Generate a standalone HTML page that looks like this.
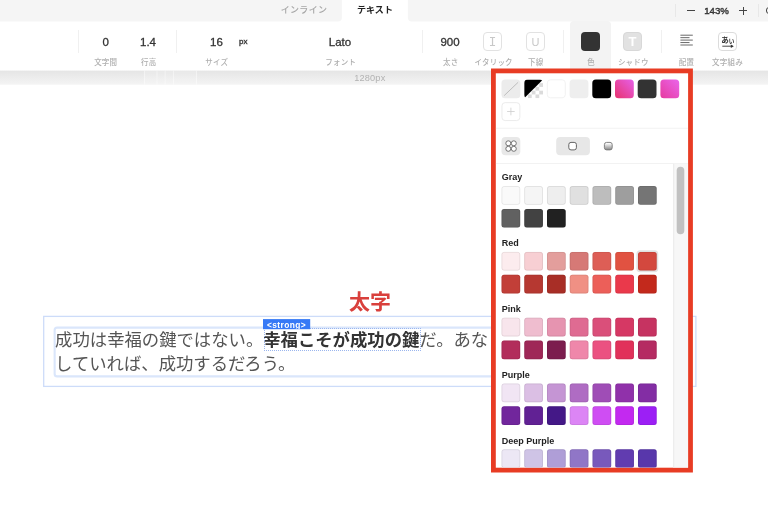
<!DOCTYPE html>
<html lang="ja">
<head>
<meta charset="utf-8">
<title>テキスト</title>
<style>
*{box-sizing:border-box;margin:0;padding:0}
html,body{width:768px;height:509px;overflow:hidden;background:#fff}
body{position:relative;will-change:transform;font-family:"Liberation Sans","Noto Sans CJK JP",sans-serif;color:#333}
.abs{position:absolute}
#topbar{position:absolute;left:0;top:0;width:768px;height:21px;background:#f5f5f5}
#tab-inline{position:absolute;left:270px;top:0;width:68px;height:21px;line-height:20px;text-align:center;font-size:9px;font-weight:500;color:#a6a6a6;letter-spacing:.3px}
#tab-text{position:absolute;left:342px;top:.4px;width:66px;height:21px;line-height:20px;text-align:center;font-size:9px;font-weight:700;color:#222;letter-spacing:.1px}
#toolbar{position:absolute;left:0;top:21px;width:768px;height:50px;background:#fff}
#ruler{position:absolute;left:0;top:71px;width:768px;height:13px;background:linear-gradient(#e6e6e6,#f4f4f4)}
.vdiv{position:absolute;top:30px;width:1px;height:23px;background:#f0f0f0}
.val{position:absolute;top:34px;height:16px;line-height:16px;font-size:11.5px;color:#333;-webkit-text-stroke:.3px #333;text-align:center;transform:translateX(-50%);white-space:nowrap}
.lab{position:absolute;top:56.8px;margin-left:.7px;font-weight:500;height:12px;line-height:12px;font-size:7.5px;color:#b0b0b0;text-align:center;transform:translateX(-50%);white-space:nowrap;letter-spacing:.2px}
.ibox{position:absolute;top:32px;width:19px;height:19px;border:1px solid #e2e2e2;border-radius:4px;background:#fff;color:#c8c8c8;font-size:10px;line-height:17px;text-align:center}
#colorbtn{position:absolute;left:570px;top:21px;width:41px;height:50px;background:#f3f3f3;border-radius:4px 4px 0 0}
#colorsq{position:absolute;left:581px;top:32px;width:19px;height:19px;border-radius:4px;background:#333}
#shadowsq{position:absolute;left:623px;top:32px;width:19px;height:19px;border-radius:4px;background:#e2e2e2;border:1px solid #d8d8d8;color:#fff;font-weight:700;font-size:13px;line-height:17px;text-align:center}
/* canvas */
#frame-outer{position:absolute;left:43px;top:315.8px;width:653.4px;height:71.2px;border:1.2px solid #cddcf8}
#frame-inner{position:absolute;left:53px;top:326px;width:637px;height:52px;border:2.6px solid #dbe6fb;border-radius:3px}
#para{position:absolute;left:55.1px;top:327.65px;width:700px;font-family:"Liberation Sans","Noto Sans CJK JP",sans-serif;font-size:17.35px;line-height:24px;color:#555;white-space:nowrap}
#para b{font-weight:700;color:#333}
#selbox{position:absolute;left:264px;top:328px;width:157px;height:22.6px;border:1px dotted #9bb6ee}
#tag{position:absolute;left:263px;top:319px;width:47.2px;height:10.4px;color:#fff;font-size:8.4px;font-weight:700;line-height:10.2px;padding-top:.8px;text-align:center;letter-spacing:.42px;overflow:hidden}
#futoji{position:absolute;left:348.6px;top:288.3px;width:43px;height:28px;line-height:28px;font-size:21px;font-weight:700;color:#d9403c;text-align:center;white-space:nowrap}
/* panel */
#panel{position:absolute;left:491px;top:68.5px;width:202px;height:404px;border:4.8px solid #e83c24;background:#fff;overflow:hidden}
.sw{position:absolute;width:19px;height:19px;border-radius:3px}
.sw.lt{box-shadow:inset 0 0 0 1px rgba(0,0,0,.08)}
.gl{font-family:"Liberation Sans",sans-serif;font-size:9px;font-weight:700;fill:#222}
.hline{position:absolute;left:496px;width:192px;height:1px;background:#efefef}
#strack{position:absolute;left:673.5px;top:164px;width:14.7px;height:304px;background:#f7f7f7;border-left:1px solid #e6e6e6}
#sthumb{position:absolute;left:676.7px;top:167px;width:7.6px;height:67px;border-radius:4px;background:#c1c1c1}
</style>
</head>
<body>
<svg class="abs" style="left:0;top:0" width="768" height="100" viewBox="0 0 768 100">
<defs><linearGradient id="rg" x1="0" y1="0" x2="0" y2="1"><stop offset="0" stop-color="#e5e5e5"/><stop offset="1" stop-color="#f4f4f4"/></linearGradient></defs>
<path d="M0 0H341.9V17.5a4 4 0 0 1 -4 4H0Z" fill="#f5f5f5"/>
<path d="M407.9 0H768V21.5H411.9a4 4 0 0 1 -4 -4Z" fill="#f5f5f5"/>
<rect x="0" y="70.6" width="768" height="14.1" fill="url(#rg)"/>
<g fill="#fff" fill-opacity=".55"><rect x="144" y="70.6" width=".8" height="14.1"/><rect x="156.6" y="70.6" width=".8" height="14.1"/><rect x="164.7" y="70.6" width=".8" height="14.1"/><rect x="173.2" y="70.6" width=".8" height="14.1"/><rect x="196.2" y="70.6" width=".8" height="14.1"/></g>
<rect x="144" y="70.6" width="53" height="14.1" fill="#fff" fill-opacity=".12"/>
</svg>
<div id="tab-inline">インライン</div>
<div id="tab-text">テキスト</div>
<div class="abs" style="left:349.8px;top:71.8px;width:40px;height:12px;line-height:12px;font-size:9.2px;color:#b2b2b2;text-align:center;letter-spacing:.2px">1280px</div>

<!-- zoom controls -->
<div class="abs" style="left:675px;top:4px;width:1px;height:13px;background:#e8e8e8"></div>
<div class="abs" style="left:758px;top:4px;width:1px;height:13px;background:#e8e8e8"></div>
<div class="abs" style="left:687px;top:10px;width:8px;height:1px;background:#444"></div>
<div class="abs" style="left:700.6px;top:3.3px;width:32px;height:15px;line-height:15px;font-size:9.7px;color:#333;-webkit-text-stroke:.4px #333;text-align:center">143%</div>
<div class="abs" style="left:739px;top:10px;width:8px;height:1px;background:#444"></div>
<div class="abs" style="left:742.5px;top:6.5px;width:1px;height:8px;background:#444"></div>
<div class="abs" style="left:766px;top:7px;width:6px;height:7px;border:1px solid #444;border-radius:3px"></div>

<!-- toolbar items -->
<div class="vdiv" style="left:78px"></div>
<div class="vdiv" style="left:176px"></div>
<div class="vdiv" style="left:422px"></div>
<div class="vdiv" style="left:563px"></div>
<div class="vdiv" style="left:661px"></div>

<div class="val" style="left:105.8px">0</div>
<div class="lab" style="left:105px">文字間</div>
<div class="val" style="left:148px">1.4</div>
<div class="lab" style="left:148px">行高</div>
<div class="val" style="left:216.4px">16</div>
<div class="abs" style="left:239px;top:37.3px;font-size:8px;line-height:10px;color:#333;-webkit-text-stroke:.35px #333">px</div>
<div class="lab" style="left:216px">サイズ</div>
<div class="val" style="left:340px">Lato</div>
<div class="lab" style="left:340px">フォント</div>
<div class="val" style="left:450px">900</div>
<div class="lab" style="left:450px">太さ</div>
<div class="ibox" style="left:483px;font-family:'Liberation Mono',monospace;font-size:12.6px;line-height:20.4px;overflow:hidden">I</div>
<div class="lab" style="left:493px">イタリック</div>
<div class="ibox" style="left:526px;font-size:11px;line-height:18.6px;overflow:hidden">U</div>
<div class="lab" style="left:535px">下線</div>
<div id="colorbtn"></div>
<div id="colorsq"></div>
<div class="lab" style="left:590.5px">色</div>
<div id="shadowsq">T</div>
<div class="lab" style="left:632.6px">シャドウ</div>
<!-- align icon -->
<svg class="abs" style="left:680px;top:33px" width="14" height="14" viewBox="0 0 14 14"><g stroke="#444" stroke-width=".8"><line x1="0.4" y1="2.2" x2="12.8" y2="2.2"/><line x1="0.4" y1="4.65" x2="9.5" y2="4.65"/><line x1="0.4" y1="7.1" x2="12.8" y2="7.1"/><line x1="0.4" y1="9.55" x2="9.5" y2="9.55"/><line x1="0.4" y1="12" x2="12.8" y2="12"/></g></svg>
<div class="lab" style="left:685.8px">配置</div>
<div class="ibox" style="left:718px;border-color:#dcdcdc"></div><div class="abs" style="left:721.2px;top:35.5px;width:14px;height:10px;line-height:10px;font-size:7.6px;color:#333;font-weight:700;white-space:nowrap"><span>あ</span><span style="font-size:5.6px">い</span></div>
<svg class="abs" style="left:718px;top:32px" width="19" height="19" viewBox="0 0 19 19"><path d="M4.3 14.2h10.2" stroke="#333" stroke-width=".9" fill="none"/><path d="M12.8 12.5l3 1.7l-3 1.7z" fill="#333"/></svg>

<div class="lab" style="left:726.8px">文字組み</div>

<!-- canvas -->
<div id="futoji">太字</div>
<svg class="abs" style="left:0;top:300px" width="768" height="100" viewBox="0 300 768 100"><rect x="43.7" y="316.4" width="652.2" height="70" fill="none" stroke="#cddcf9" stroke-width="1.3"/><rect x="54.65" y="327.6" width="636" height="48.8" rx="2.5" fill="none" stroke="#dae6fb" stroke-width="2.1"/></svg>
<div id="para">成功は幸福の鍵ではない。<b>幸福こそが成功の鍵</b>だ。あな<br>していれば、成功するだろう。</div>
<div id="selbox"></div>
<svg class="abs" style="left:260px;top:316px" width="56" height="16" viewBox="260 316 56 16"><rect x="263" y="319.1" width="47.2" height="10.1" fill="#3679f6"/></svg>
<div id="tag">&lt;strong&gt;</div>

<!-- panel -->
<svg class="abs" style="left:0;top:0" width="768" height="509" viewBox="0 0 768 509">
<defs>
<clipPath id="pc"><rect x="495.8" y="73.4" width="192.3" height="394.2"/></clipPath>
<clipPath id="rc"><rect x="524.2" y="79.4" width="18.8" height="18.8" rx="3.5"/></clipPath>
<linearGradient id="g1" x1="0" y1="1" x2="1" y2="0"><stop offset="0" stop-color="#e8336e"/><stop offset="1" stop-color="#e660ea"/></linearGradient>
<linearGradient id="g2" x1="1" y1="0" x2="0" y2="1"><stop offset="0" stop-color="#ea66ec"/><stop offset="1" stop-color="#e63a9e"/></linearGradient>
<linearGradient id="g3" x1="0" y1="0" x2="0" y2="1"><stop offset="0.1" stop-color="#fff"/><stop offset="1" stop-color="#858585"/></linearGradient>
</defs>
<rect x="493.4" y="70.9" width="197.1" height="399.2" fill="#fff" stroke="#e83c24" stroke-width="4.8"/>
<g clip-path="url(#pc)">
<!-- top swatches -->
<rect x="501.5" y="79.4" width="18.8" height="18.8" rx="3.5" fill="#ececec"/>
<line x1="504.2" y1="95.6" x2="518.1" y2="82.3" stroke="#b8b8b8" stroke-width=".9"/>
<g clip-path="url(#rc)"><rect x="524.2" y="79.4" width="19" height="19" fill="#fff"/>
<g fill="#dbdbdb" transform="translate(524.2 79.4)"><rect x="15.04" y="3.76" width="3.76" height="3.76"/><rect x="11.28" y="7.52" width="3.76" height="3.76"/><rect x="15.04" y="11.28" width="3.76" height="3.76"/><rect x="7.52" y="11.28" width="3.76" height="3.76"/><rect x="3.76" y="15.04" width="3.76" height="3.76"/><rect x="11.28" y="15.04" width="3.76" height="3.76"/></g>
<polygon points="524.2,79.4 543,79.4 524.2,98.2" fill="#000"/></g>
<rect x="547.3" y="79.8" width="18" height="18" rx="3.2" fill="#fff" stroke="#f0f0f0" stroke-width=".9"/>
<rect x="569.6" y="79.4" width="18.8" height="18.8" rx="3.5" fill="#eeeeee"/>
<rect x="592.3" y="79.4" width="18.8" height="18.8" rx="3.5" fill="#000"/>
<rect x="615" y="79.4" width="18.8" height="18.8" rx="3.5" fill="url(#g1)"/>
<rect x="637.7" y="79.4" width="18.8" height="18.8" rx="3.5" fill="#333"/>
<rect x="660.4" y="79.4" width="18.8" height="18.8" rx="3.5" fill="url(#g2)"/>
<rect x="501.95" y="102.65" width="17.9" height="17.9" rx="3.2" fill="#fff" stroke="#e9e9e9" stroke-width=".9"/>
<path d="M507.1 111.5h7.6M510.9 107.7v7.6" stroke="#d0d0d0" stroke-width=".85" fill="none"/>
<rect x="495.8" y="127.8" width="192.3" height=".9" fill="#f1f1f1"/>
<!-- mode row -->
<rect x="501.5" y="136.9" width="18.8" height="18.4" rx="4" fill="#e8e8e8"/>
<g fill="#fff" stroke="#555" stroke-width=".8"><circle cx="508.3" cy="143.3" r="2.5"/><circle cx="513.8" cy="143.3" r="2.5"/><circle cx="508.3" cy="148.8" r="2.5"/><circle cx="513.8" cy="148.8" r="2.5"/></g>
<rect x="556.2" y="136.9" width="33.7" height="18.4" rx="4" fill="#e7e7e7"/>
<rect x="568.8" y="142.4" width="7.6" height="7.5" rx="2.2" fill="#fff" stroke="#555" stroke-width=".9"/>
<rect x="604.4" y="142.4" width="7.8" height="7.5" rx="2.2" fill="url(#g3)" stroke="#777" stroke-width=".9"/>
<rect x="495.8" y="163" width="192.3" height=".9" fill="#f1f1f1"/>
<!-- scrollbar -->
<rect x="673.3" y="163.9" width="15" height="304" fill="#f7f7f7"/>
<rect x="673.3" y="163.9" width=".9" height="304" fill="#e8e8e8"/>
<rect x="676.7" y="166.8" width="7.6" height="67.4" rx="3.8" fill="#c1c1c1"/>
<g>
<text x="501.8" y="180.4" class="gl">Gray</text>
<rect x="501.50" y="186.10" width="18.7" height="18.7" rx="2.5" fill="#fafafa"/>
<rect x="501.90" y="186.50" width="17.9" height="17.9" rx="2.2" fill="none" stroke="#000" stroke-opacity=".09" stroke-width=".8"/>
<rect x="524.25" y="186.10" width="18.7" height="18.7" rx="2.5" fill="#f5f5f5"/>
<rect x="524.65" y="186.50" width="17.9" height="17.9" rx="2.2" fill="none" stroke="#000" stroke-opacity=".09" stroke-width=".8"/>
<rect x="547.00" y="186.10" width="18.7" height="18.7" rx="2.5" fill="#eeeeee"/>
<rect x="547.40" y="186.50" width="17.9" height="17.9" rx="2.2" fill="none" stroke="#000" stroke-opacity=".09" stroke-width=".8"/>
<rect x="569.75" y="186.10" width="18.7" height="18.7" rx="2.5" fill="#e0e0e0"/>
<rect x="570.15" y="186.50" width="17.9" height="17.9" rx="2.2" fill="none" stroke="#000" stroke-opacity=".09" stroke-width=".8"/>
<rect x="592.50" y="186.10" width="18.7" height="18.7" rx="2.5" fill="#bdbdbd"/>
<rect x="592.90" y="186.50" width="17.9" height="17.9" rx="2.2" fill="none" stroke="#000" stroke-opacity=".09" stroke-width=".8"/>
<rect x="615.25" y="186.10" width="18.7" height="18.7" rx="2.5" fill="#9e9e9e"/>
<rect x="615.65" y="186.50" width="17.9" height="17.9" rx="2.2" fill="none" stroke="#000" stroke-opacity=".09" stroke-width=".8"/>
<rect x="638.00" y="186.10" width="18.7" height="18.7" rx="2.5" fill="#757575"/>
<rect x="638.40" y="186.50" width="17.9" height="17.9" rx="2.2" fill="none" stroke="#000" stroke-opacity=".09" stroke-width=".8"/>
<rect x="501.50" y="208.90" width="18.7" height="18.7" rx="2.5" fill="#616161"/>
<rect x="501.90" y="209.30" width="17.9" height="17.9" rx="2.2" fill="none" stroke="#000" stroke-opacity=".09" stroke-width=".8"/>
<rect x="524.25" y="208.90" width="18.7" height="18.7" rx="2.5" fill="#424242"/>
<rect x="524.65" y="209.30" width="17.9" height="17.9" rx="2.2" fill="none" stroke="#000" stroke-opacity=".09" stroke-width=".8"/>
<rect x="547.00" y="208.90" width="18.7" height="18.7" rx="2.5" fill="#212121"/>
<rect x="547.40" y="209.30" width="17.9" height="17.9" rx="2.2" fill="none" stroke="#000" stroke-opacity=".09" stroke-width=".8"/>
<text x="501.8" y="246.2" class="gl">Red</text>
<rect x="501.50" y="251.90" width="18.7" height="18.7" rx="2.5" fill="#fcecee"/>
<rect x="501.90" y="252.30" width="17.9" height="17.9" rx="2.2" fill="none" stroke="#000" stroke-opacity=".09" stroke-width=".8"/>
<rect x="524.25" y="251.90" width="18.7" height="18.7" rx="2.5" fill="#f7cfd3"/>
<rect x="524.65" y="252.30" width="17.9" height="17.9" rx="2.2" fill="none" stroke="#000" stroke-opacity=".09" stroke-width=".8"/>
<rect x="547.00" y="251.90" width="18.7" height="18.7" rx="2.5" fill="#e39e9c"/>
<rect x="547.40" y="252.30" width="17.9" height="17.9" rx="2.2" fill="none" stroke="#000" stroke-opacity=".09" stroke-width=".8"/>
<rect x="569.75" y="251.90" width="18.7" height="18.7" rx="2.5" fill="#d67976"/>
<rect x="570.15" y="252.30" width="17.9" height="17.9" rx="2.2" fill="none" stroke="#000" stroke-opacity=".09" stroke-width=".8"/>
<rect x="592.50" y="251.90" width="18.7" height="18.7" rx="2.5" fill="#dd5e56"/>
<rect x="592.90" y="252.30" width="17.9" height="17.9" rx="2.2" fill="none" stroke="#000" stroke-opacity=".09" stroke-width=".8"/>
<rect x="615.25" y="251.90" width="18.7" height="18.7" rx="2.5" fill="#e15241"/>
<rect x="615.65" y="252.30" width="17.9" height="17.9" rx="2.2" fill="none" stroke="#000" stroke-opacity=".09" stroke-width=".8"/>
<rect x="636.40" y="250.30" width="21.9" height="21.9" rx="3.8" fill="#e3e3e3"/>
<rect x="638.00" y="251.90" width="18.7" height="18.7" rx="2.5" fill="#d3483e"/>
<rect x="638.40" y="252.30" width="17.9" height="17.9" rx="2.2" fill="none" stroke="#000" stroke-opacity=".09" stroke-width=".8"/>
<rect x="501.50" y="274.70" width="18.7" height="18.7" rx="2.5" fill="#c23f38"/>
<rect x="501.90" y="275.10" width="17.9" height="17.9" rx="2.2" fill="none" stroke="#000" stroke-opacity=".09" stroke-width=".8"/>
<rect x="524.25" y="274.70" width="18.7" height="18.7" rx="2.5" fill="#b63831"/>
<rect x="524.65" y="275.10" width="17.9" height="17.9" rx="2.2" fill="none" stroke="#000" stroke-opacity=".09" stroke-width=".8"/>
<rect x="547.00" y="274.70" width="18.7" height="18.7" rx="2.5" fill="#a82e26"/>
<rect x="547.40" y="275.10" width="17.9" height="17.9" rx="2.2" fill="none" stroke="#000" stroke-opacity=".09" stroke-width=".8"/>
<rect x="569.75" y="274.70" width="18.7" height="18.7" rx="2.5" fill="#f09084"/>
<rect x="570.15" y="275.10" width="17.9" height="17.9" rx="2.2" fill="none" stroke="#000" stroke-opacity=".09" stroke-width=".8"/>
<rect x="592.50" y="274.70" width="18.7" height="18.7" rx="2.5" fill="#ec5f59"/>
<rect x="592.90" y="275.10" width="17.9" height="17.9" rx="2.2" fill="none" stroke="#000" stroke-opacity=".09" stroke-width=".8"/>
<rect x="615.25" y="274.70" width="18.7" height="18.7" rx="2.5" fill="#ea394b"/>
<rect x="615.65" y="275.10" width="17.9" height="17.9" rx="2.2" fill="none" stroke="#000" stroke-opacity=".09" stroke-width=".8"/>
<rect x="638.00" y="274.70" width="18.7" height="18.7" rx="2.5" fill="#c3291c"/>
<rect x="638.40" y="275.10" width="17.9" height="17.9" rx="2.2" fill="none" stroke="#000" stroke-opacity=".09" stroke-width=".8"/>
<text x="501.8" y="312.0" class="gl">Pink</text>
<rect x="501.50" y="317.70" width="18.7" height="18.7" rx="2.5" fill="#f8e5ec"/>
<rect x="501.90" y="318.10" width="17.9" height="17.9" rx="2.2" fill="none" stroke="#000" stroke-opacity=".09" stroke-width=".8"/>
<rect x="524.25" y="317.70" width="18.7" height="18.7" rx="2.5" fill="#efbdcf"/>
<rect x="524.65" y="318.10" width="17.9" height="17.9" rx="2.2" fill="none" stroke="#000" stroke-opacity=".09" stroke-width=".8"/>
<rect x="547.00" y="317.70" width="18.7" height="18.7" rx="2.5" fill="#e694b0"/>
<rect x="547.40" y="318.10" width="17.9" height="17.9" rx="2.2" fill="none" stroke="#000" stroke-opacity=".09" stroke-width=".8"/>
<rect x="569.75" y="317.70" width="18.7" height="18.7" rx="2.5" fill="#df6b92"/>
<rect x="570.15" y="318.10" width="17.9" height="17.9" rx="2.2" fill="none" stroke="#000" stroke-opacity=".09" stroke-width=".8"/>
<rect x="592.50" y="317.70" width="18.7" height="18.7" rx="2.5" fill="#da4f7a"/>
<rect x="592.90" y="318.10" width="17.9" height="17.9" rx="2.2" fill="none" stroke="#000" stroke-opacity=".09" stroke-width=".8"/>
<rect x="615.25" y="317.70" width="18.7" height="18.7" rx="2.5" fill="#d63864"/>
<rect x="615.65" y="318.10" width="17.9" height="17.9" rx="2.2" fill="none" stroke="#000" stroke-opacity=".09" stroke-width=".8"/>
<rect x="638.00" y="317.70" width="18.7" height="18.7" rx="2.5" fill="#c63361"/>
<rect x="638.40" y="318.10" width="17.9" height="17.9" rx="2.2" fill="none" stroke="#000" stroke-opacity=".09" stroke-width=".8"/>
<rect x="501.50" y="340.50" width="18.7" height="18.7" rx="2.5" fill="#b22d5b"/>
<rect x="501.90" y="340.90" width="17.9" height="17.9" rx="2.2" fill="none" stroke="#000" stroke-opacity=".09" stroke-width=".8"/>
<rect x="524.25" y="340.50" width="18.7" height="18.7" rx="2.5" fill="#9f2757"/>
<rect x="524.65" y="340.90" width="17.9" height="17.9" rx="2.2" fill="none" stroke="#000" stroke-opacity=".09" stroke-width=".8"/>
<rect x="547.00" y="340.50" width="18.7" height="18.7" rx="2.5" fill="#7c1d4e"/>
<rect x="547.40" y="340.90" width="17.9" height="17.9" rx="2.2" fill="none" stroke="#000" stroke-opacity=".09" stroke-width=".8"/>
<rect x="569.75" y="340.50" width="18.7" height="18.7" rx="2.5" fill="#ef87aa"/>
<rect x="570.15" y="340.90" width="17.9" height="17.9" rx="2.2" fill="none" stroke="#000" stroke-opacity=".09" stroke-width=".8"/>
<rect x="592.50" y="340.50" width="18.7" height="18.7" rx="2.5" fill="#eb5181"/>
<rect x="592.90" y="340.90" width="17.9" height="17.9" rx="2.2" fill="none" stroke="#000" stroke-opacity=".09" stroke-width=".8"/>
<rect x="615.25" y="340.50" width="18.7" height="18.7" rx="2.5" fill="#e1315a"/>
<rect x="615.65" y="340.90" width="17.9" height="17.9" rx="2.2" fill="none" stroke="#000" stroke-opacity=".09" stroke-width=".8"/>
<rect x="638.00" y="340.50" width="18.7" height="18.7" rx="2.5" fill="#b52b62"/>
<rect x="638.40" y="340.90" width="17.9" height="17.9" rx="2.2" fill="none" stroke="#000" stroke-opacity=".09" stroke-width=".8"/>
<text x="501.8" y="377.8" class="gl">Purple</text>
<rect x="501.50" y="383.50" width="18.7" height="18.7" rx="2.5" fill="#f1e5f4"/>
<rect x="501.90" y="383.90" width="17.9" height="17.9" rx="2.2" fill="none" stroke="#000" stroke-opacity=".09" stroke-width=".8"/>
<rect x="524.25" y="383.50" width="18.7" height="18.7" rx="2.5" fill="#dbbfe4"/>
<rect x="524.65" y="383.90" width="17.9" height="17.9" rx="2.2" fill="none" stroke="#000" stroke-opacity=".09" stroke-width=".8"/>
<rect x="547.00" y="383.50" width="18.7" height="18.7" rx="2.5" fill="#c595d4"/>
<rect x="547.40" y="383.90" width="17.9" height="17.9" rx="2.2" fill="none" stroke="#000" stroke-opacity=".09" stroke-width=".8"/>
<rect x="569.75" y="383.50" width="18.7" height="18.7" rx="2.5" fill="#af6cc3"/>
<rect x="570.15" y="383.90" width="17.9" height="17.9" rx="2.2" fill="none" stroke="#000" stroke-opacity=".09" stroke-width=".8"/>
<rect x="592.50" y="383.50" width="18.7" height="18.7" rx="2.5" fill="#9f4db6"/>
<rect x="592.90" y="383.90" width="17.9" height="17.9" rx="2.2" fill="none" stroke="#000" stroke-opacity=".09" stroke-width=".8"/>
<rect x="615.25" y="383.50" width="18.7" height="18.7" rx="2.5" fill="#9031aa"/>
<rect x="615.65" y="383.90" width="17.9" height="17.9" rx="2.2" fill="none" stroke="#000" stroke-opacity=".09" stroke-width=".8"/>
<rect x="638.00" y="383.50" width="18.7" height="18.7" rx="2.5" fill="#832da4"/>
<rect x="638.40" y="383.90" width="17.9" height="17.9" rx="2.2" fill="none" stroke="#000" stroke-opacity=".09" stroke-width=".8"/>
<rect x="501.50" y="406.30" width="18.7" height="18.7" rx="2.5" fill="#71269c"/>
<rect x="501.90" y="406.70" width="17.9" height="17.9" rx="2.2" fill="none" stroke="#000" stroke-opacity=".09" stroke-width=".8"/>
<rect x="524.25" y="406.30" width="18.7" height="18.7" rx="2.5" fill="#612194"/>
<rect x="524.65" y="406.70" width="17.9" height="17.9" rx="2.2" fill="none" stroke="#000" stroke-opacity=".09" stroke-width=".8"/>
<rect x="547.00" y="406.30" width="18.7" height="18.7" rx="2.5" fill="#441887"/>
<rect x="547.40" y="406.70" width="17.9" height="17.9" rx="2.2" fill="none" stroke="#000" stroke-opacity=".09" stroke-width=".8"/>
<rect x="569.75" y="406.30" width="18.7" height="18.7" rx="2.5" fill="#dc85f5"/>
<rect x="570.15" y="406.70" width="17.9" height="17.9" rx="2.2" fill="none" stroke="#000" stroke-opacity=".09" stroke-width=".8"/>
<rect x="592.50" y="406.30" width="18.7" height="18.7" rx="2.5" fill="#cf4df3"/>
<rect x="592.90" y="406.70" width="17.9" height="17.9" rx="2.2" fill="none" stroke="#000" stroke-opacity=".09" stroke-width=".8"/>
<rect x="615.25" y="406.30" width="18.7" height="18.7" rx="2.5" fill="#c329f0"/>
<rect x="615.65" y="406.70" width="17.9" height="17.9" rx="2.2" fill="none" stroke="#000" stroke-opacity=".09" stroke-width=".8"/>
<rect x="638.00" y="406.30" width="18.7" height="18.7" rx="2.5" fill="#9c1ff5"/>
<rect x="638.40" y="406.70" width="17.9" height="17.9" rx="2.2" fill="none" stroke="#000" stroke-opacity=".09" stroke-width=".8"/>
<text x="501.8" y="443.6" class="gl">Deep Purple</text>
<rect x="501.50" y="449.30" width="18.7" height="18.7" rx="2.5" fill="#ece7f5"/>
<rect x="501.90" y="449.70" width="17.9" height="17.9" rx="2.2" fill="none" stroke="#000" stroke-opacity=".09" stroke-width=".8"/>
<rect x="524.25" y="449.30" width="18.7" height="18.7" rx="2.5" fill="#cfc4e6"/>
<rect x="524.65" y="449.70" width="17.9" height="17.9" rx="2.2" fill="none" stroke="#000" stroke-opacity=".09" stroke-width=".8"/>
<rect x="547.00" y="449.30" width="18.7" height="18.7" rx="2.5" fill="#af9ed7"/>
<rect x="547.40" y="449.70" width="17.9" height="17.9" rx="2.2" fill="none" stroke="#000" stroke-opacity=".09" stroke-width=".8"/>
<rect x="569.75" y="449.30" width="18.7" height="18.7" rx="2.5" fill="#9076c7"/>
<rect x="570.15" y="449.70" width="17.9" height="17.9" rx="2.2" fill="none" stroke="#000" stroke-opacity=".09" stroke-width=".8"/>
<rect x="592.50" y="449.30" width="18.7" height="18.7" rx="2.5" fill="#7859bc"/>
<rect x="592.90" y="449.70" width="17.9" height="17.9" rx="2.2" fill="none" stroke="#000" stroke-opacity=".09" stroke-width=".8"/>
<rect x="615.25" y="449.30" width="18.7" height="18.7" rx="2.5" fill="#613cb0"/>
<rect x="615.65" y="449.70" width="17.9" height="17.9" rx="2.2" fill="none" stroke="#000" stroke-opacity=".09" stroke-width=".8"/>
<rect x="638.00" y="449.30" width="18.7" height="18.7" rx="2.5" fill="#5837ab"/>
<rect x="638.40" y="449.70" width="17.9" height="17.9" rx="2.2" fill="none" stroke="#000" stroke-opacity=".09" stroke-width=".8"/>
</g>
</g>
</svg>
</body>
</html>
